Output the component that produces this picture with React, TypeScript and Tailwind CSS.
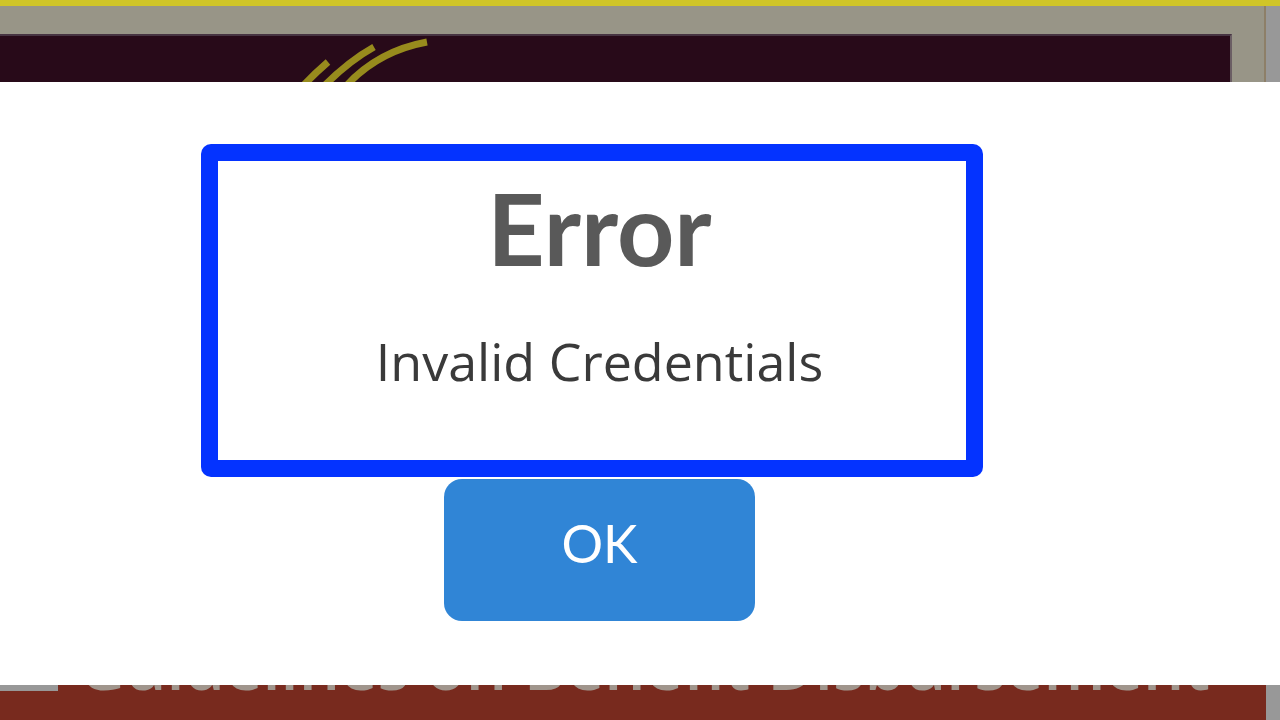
function Swoosh() {
  return (
    <svg className="ml-[290px] h-12 w-40" viewBox="0 0 160 48" fill="none" stroke="#978b1d" strokeWidth="7" aria-hidden="true">
      <path d="M9 54 Q24 38 38 26" />
      <path d="M34 50 Q59 25 84 11" />
      <path d="M56 50 Q88 15 137 6" />
    </svg>
  );
}

function PortalPage() {
  return (
    <div className="flex min-h-screen flex-col bg-[#989898]">
      <div className="h-1.5 bg-[#d0c528]" />
      <main className="mr-3.5 flex flex-1 flex-col border-r-2 border-[#8d7f68] bg-[#989587] pt-7">
        <header className="mr-8 h-[500px] border-t-2 border-r-2 border-t-[#473442] border-r-[#6b5e64] bg-[#280a19]">
          <Swoosh />
        </header>
        <section className="-mr-0.5 mt-auto flex h-[110px] items-start bg-[#782a1e]">
          <div className="h-[81px] w-[58px] shrink-0 bg-[#989898]" />
          <h2 className="pl-5 pt-3 text-[65px] leading-[86px] font-semibold whitespace-nowrap text-[#a0958c]">
            Guidelines on Benefit Disbursement
          </h2>
        </section>
      </main>
    </div>
  );
}

function ErrorDialog() {
  return (
    <div
      role="alertdialog"
      aria-labelledby="dialog-title"
      aria-describedby="dialog-message"
      className="absolute inset-x-0 top-[82px] flex flex-col items-center bg-white pt-[62px] pr-[81px] pb-16"
    >
      <div className="-ml-4 flex w-[782px] max-w-full flex-col items-center rounded-[10px] bg-[#0433ff] p-[17px]">
        <div className="flex h-[299px] w-full flex-col items-center bg-white pt-1.5 pl-4">
          <h1 id="dialog-title" className="font-['Lato',sans-serif] text-[100px] leading-[120px] font-bold text-[#595959]">
            Error
          </h1>
          <p id="dialog-message" className="mt-10 text-[52px] leading-[68px] whitespace-nowrap text-[#3a3a3a]">
            Invalid Credentials
          </p>
        </div>
      </div>
      <button type="button" className="mt-0.5 h-[142px] w-[311px] rounded-[18px] bg-[#3085d6] pb-3.5 font-['Lato',sans-serif] text-[52px] text-white">
        OK
      </button>
    </div>
  );
}

export default function App() {
  return (
    <div className="relative h-screen overflow-hidden font-['Open_Sans',sans-serif]">
      <PortalPage />
      <ErrorDialog />
    </div>
  );
}
